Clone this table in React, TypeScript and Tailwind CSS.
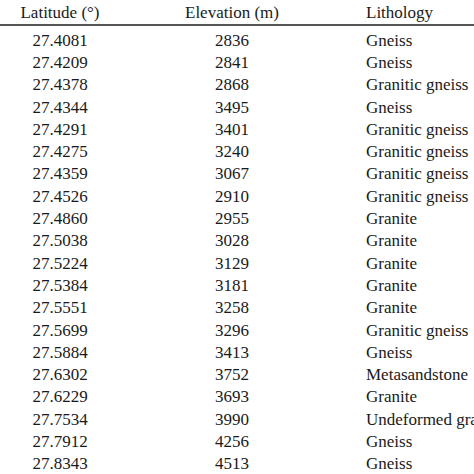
import React from 'react'

const rows = [
  { lat: '27.4081', elev: '2836', lith: 'Gneiss' },
  { lat: '27.4209', elev: '2841', lith: 'Gneiss' },
  { lat: '27.4378', elev: '2868', lith: 'Granitic gneiss' },
  { lat: '27.4344', elev: '3495', lith: 'Gneiss' },
  { lat: '27.4291', elev: '3401', lith: 'Granitic gneiss' },
  { lat: '27.4275', elev: '3240', lith: 'Granitic gneiss' },
  { lat: '27.4359', elev: '3067', lith: 'Granitic gneiss' },
  { lat: '27.4526', elev: '2910', lith: 'Granitic gneiss' },
  { lat: '27.4860', elev: '2955', lith: 'Granite' },
  { lat: '27.5038', elev: '3028', lith: 'Granite' },
  { lat: '27.5224', elev: '3129', lith: 'Granite' },
  { lat: '27.5384', elev: '3181', lith: 'Granite' },
  { lat: '27.5551', elev: '3258', lith: 'Granite' },
  { lat: '27.5699', elev: '3296', lith: 'Granitic gneiss' },
  { lat: '27.5884', elev: '3413', lith: 'Gneiss' },
  { lat: '27.6302', elev: '3752', lith: 'Metasandstone' },
  { lat: '27.6229', elev: '3693', lith: 'Granite' },
  { lat: '27.7534', elev: '3990', lith: 'Undeformed granite' },
  { lat: '27.7912', elev: '4256', lith: 'Gneiss' },
  { lat: '27.8343', elev: '4513', lith: 'Gneiss' },
]

export default function App() {
  return (
    <div className="w-[474px] h-[474px] overflow-hidden bg-white text-[#1a1a1a] text-[17px] leading-none" style={{ fontFamily: '"Liberation Serif", "Times New Roman", serif' }}>
      <div className="grid grid-cols-[120px_224px_1fr] h-[24px] items-center">
        <div className="text-center">Latitude (°)</div>
        <div className="text-center">Elevation (m)</div>
        <div className="pl-[22px] whitespace-nowrap">Lithology</div>
      </div>
      <div className="h-[2px] bg-[#555]" />
      <div className="pt-[3px]">
        {rows.map((r) => (
          <div key={r.lat} className="grid grid-cols-[120px_224px_1fr] h-[22.3px] items-center">
            <div className="text-center">{r.lat}</div>
            <div className="text-center">{r.elev}</div>
            <div className="pl-[22px] whitespace-nowrap">{r.lith}</div>
          </div>
        ))}
      </div>
    </div>
  )
}
